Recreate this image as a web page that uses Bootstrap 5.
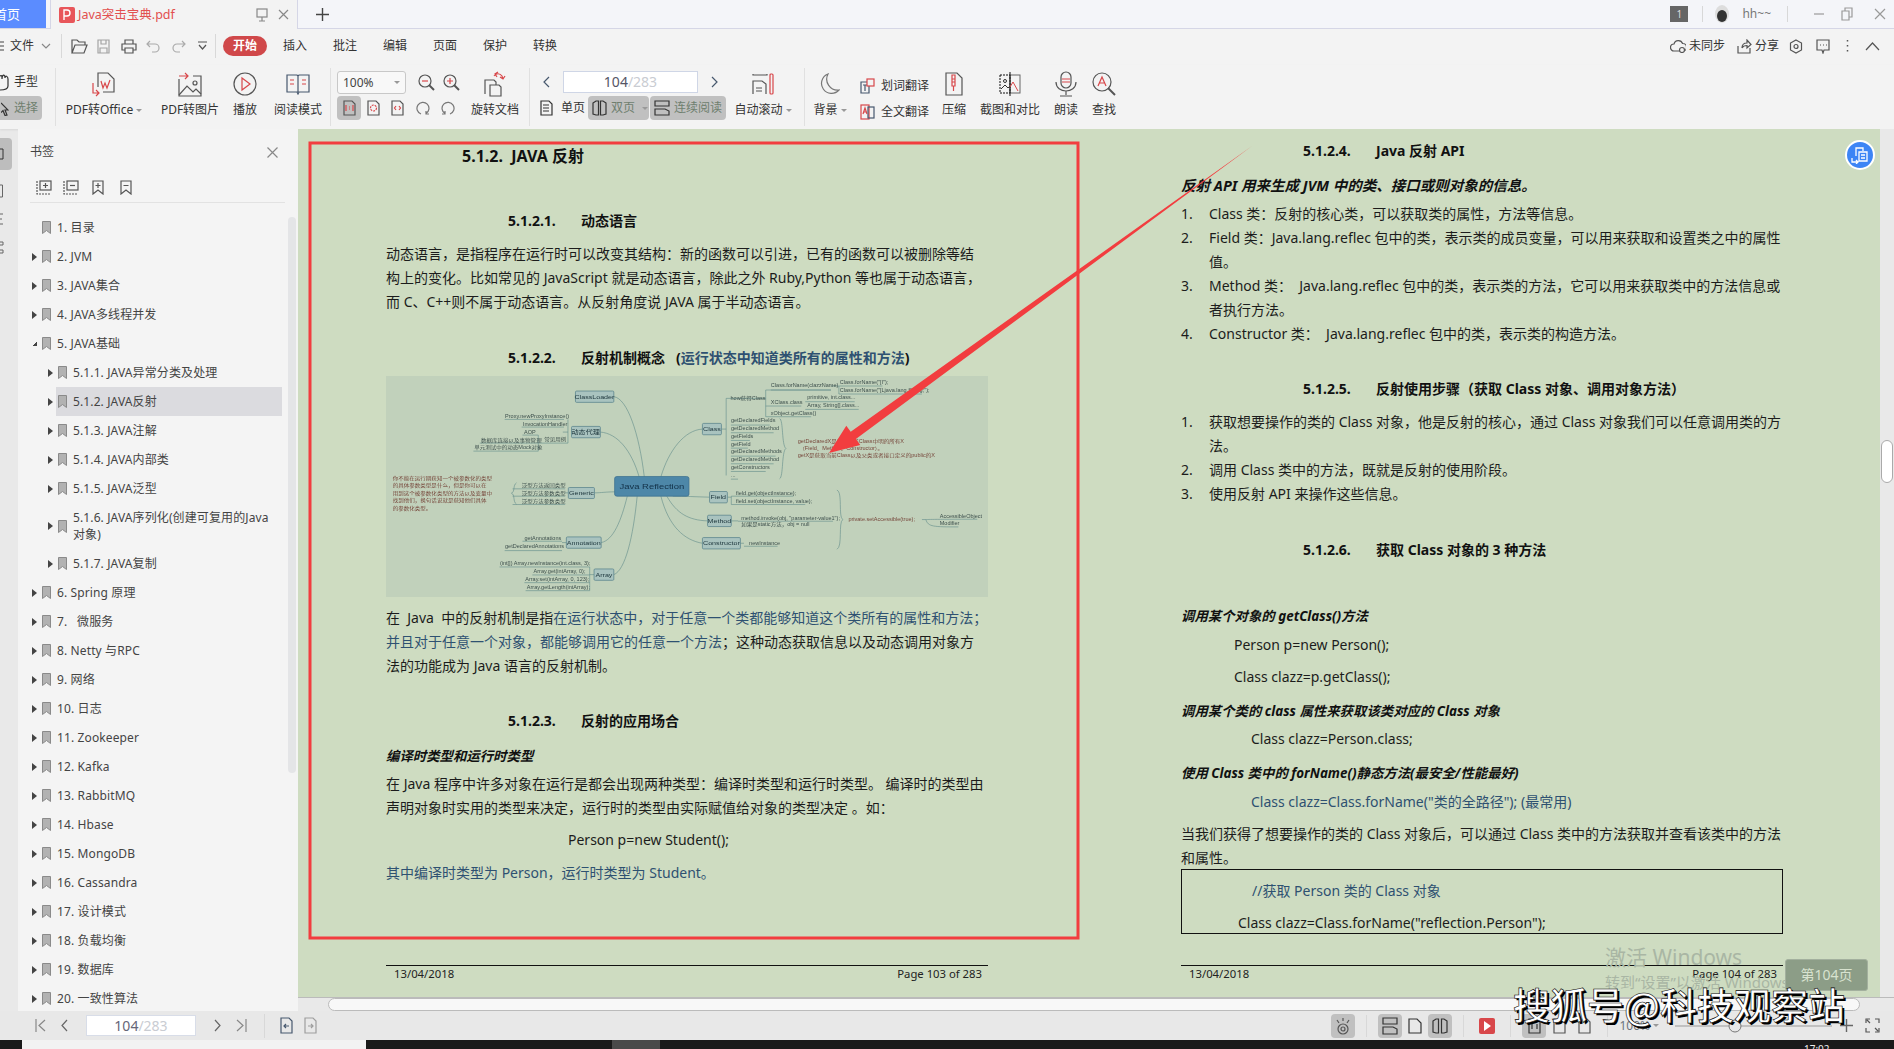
<!DOCTYPE html>
<html lang="zh"><head><meta charset="utf-8"><title>Java突击宝典.pdf</title>
<link href="https://cdn.jsdelivr.net/npm/bootstrap@5.3.0/dist/css/bootstrap.min.css" rel="stylesheet">
<style>
html,body{height:1049px;width:1894px;overflow:hidden;margin:0}
body{font-family:"Noto Sans","Noto Sans CJK SC",sans-serif;font-size:12px;color:#333;line-height:16px;position:relative;background:#f3f3f3}
svg{display:block;flex:none}
.ic{fill:none;stroke:#555;stroke-width:1.2}
.r{stroke:#d8474a}.b{stroke:#47586e}
.tabbar{height:29px;background:#f4f5f9;border-bottom:1px solid #d5d6e6}
.home{width:46px;background:#5b8cff;color:#fff;font-size:13px;line-height:29px;display:flex;justify-content:flex-end;padding-right:26px;overflow:hidden;white-space:nowrap}
.tab{width:248px;margin-left:4px;background:#f3f3f3;border:1px solid #d5d6e6;border-top:0;border-bottom:0;height:29px;padding-left:8px;color:#e25050;font-size:12.5px}
.tab .pdfi{width:16px;height:16px;background:#e8565a;border-radius:2px;margin-right:3px}
.plus{margin-left:18px}
.cnt{width:18px;height:16px;background:#666;color:#ddd;font-size:10px;line-height:16px;text-align:center}
.hh{color:#777;font-size:12px}
.vsep{width:1px;background:#d8d8d8;flex:none}
.menubar{height:36px;background:#f3f3f3;padding-bottom:2px}
.pill{width:44px;height:20px;line-height:20px;border-radius:10px;background:#d0484a;color:#fff;text-align:center;font-weight:700;margin-left:7px;margin-right:16px}
.mn{width:50px}
.ribbon{height:64px;background:#f3f3f3;box-shadow:0 1px 2px rgba(0,0,0,.08);position:relative}
.rs{width:1px;background:#e0e0e0;height:58px;margin-top:3px;flex:none}
.big{padding-top:5px;display:flex;flex-direction:column;align-items:center;flex:none}
.big .i{height:28px;display:flex;align-items:center}
.big .l{margin-top:4px;white-space:nowrap}
.caret{display:inline-block;border:3px solid transparent;border-top:3px solid #999;border-bottom:0;vertical-align:middle;margin-left:3px}
.on{background:#c0c0c0;border-radius:4px}
.on-t{color:#6f7f6f}
.g-a{width:55px;padding-top:5px}
.hand{height:24px;gap:5px}
.sel{height:24px;width:42px;margin-top:2px;border-radius:0 4px 4px 0;gap:5px;padding-left:1px}
.w86{width:86px}.w24{width:24px}.w48{width:48px}.w60{width:60px}
.ml1{margin-left:1px}.ml3{margin-left:3px}.ml16{margin-left:16px}.ml17{margin-left:17px}.ml10{margin-left:10px}.ml5{margin-left:5px}.ml8{margin-left:8px}.ml12{margin-left:12px}.ml13{margin-left:13px}.ml14{margin-left:14px}
.tools{width:126px;padding-top:5px;margin-left:6px}
.zsel{width:69px;height:23px;border:1px solid #c8c8c8;border-radius:3px;background:#f8f8f8;padding:0 5px;color:#444;font-size:12px;line-height:21px}
.tbtn{width:24px;height:24px}
.tr{height:24px}.tr2{height:24px;margin-top:2px}
.pg{width:190px;padding-top:5px;margin-left:10px}
.pgin{width:135px;height:22px;border:1px solid #cfd6e6;background:#fff;text-align:center;font-size:14px;line-height:20px;color:#556;margin:0 13px}
.mut{color:#c9ccd2}
.seg{height:24px;font-size:12px}
.s1{width:46px;padding-left:0}.s2{width:61px;margin-left:2px}.s3{width:76px;margin-left:1px}
.trn{width:72px;padding-top:8px;margin-left:13px}
.trn>div{height:26px}
.trn svg{margin-right:6px}
.rail{width:18px;background:#e9e9e9;flex:none;padding-top:9px}
.rail .act{width:12px;height:32px;background:#bdbdbd;border-radius:0 4px 4px 0}
.rail svg{margin-top:14px}
.rail .act svg{margin-top:0}
.panel{width:280px;background:#f4f4f4;flex:none;position:relative;overflow:hidden;font-size:12px;color:#444}
.ptitle{padding:0 20px 0 12px;height:46px;font-size:12px}
.ptools{margin:0 13px 0 12px;height:28px;border-bottom:1px solid #e2e2e2;padding:5px 0 0 6px}
.ptools svg:nth-child(2){margin-left:11px}
.ptools svg:nth-child(3){margin-left:13px}
.ptools svg:nth-child(4){margin-left:16px}
.ptrack{position:absolute;left:270px;top:88px;width:8px;height:556px;background:#e4e5e7;border-radius:4px}
.tree{padding-top:10px;letter-spacing:.12px}
.row-t{height:29px;display:flex;align-items:center;white-space:nowrap;padding-left:14px}
.row-t.l1{padding-left:30px}
.row-t.two{height:46px;white-space:normal;line-height:17px}
.tri{width:0;height:0;border:4px solid transparent;border-left:5px solid #444;border-right:0;margin-right:5px;flex:none}
.tri.no{border-left-color:transparent}
.tri.dn{width:5px;height:5px;border:0;background:linear-gradient(135deg,transparent 50%,#444 50%);margin-right:5px}
.row-t svg{margin-right:6px}
.row-t.cur{background:linear-gradient(#dbdbdf,#dbdbdf) no-repeat 38px 0/226px 100%}
.doc{height:868px;background:#cedcc1;position:relative}
.pdf{width:602px;height:868px;flex:none;display:flex;flex-direction:column;font-size:14px;line-height:24px;color:#1c1c1c}
.pdf.left{margin-left:88px;padding-top:15px}
.pdf.right{margin-left:193px;padding-top:10px}
.pdf p,.pdf h3,.pdf ol{margin:0;padding:0}
.pdf h3{font-size:14px;font-weight:700;line-height:24px;margin-left:122px;color:#111}
.pdf h3 i{font-style:normal;display:inline-block;width:73px}
.pdf h3.top{font-size:16px;margin-left:76px}
.bi{font-weight:700;font-style:italic;font-size:13.4px;color:#111}
.bi.lg{font-size:14.5px}
.blu{color:#2e5171}
.m4{margin-top:4px!important}.m5{margin-top:5px!important}.m6{margin-top:6px!important}.m8{margin-top:8px!important}.m9{margin-top:9px!important}.m10{margin-top:10px!important}.m11{margin-top:11px!important}.m31{margin-top:31px!important}.m32{margin-top:32px!important}.m41{margin-top:41px!important}.m42{margin-top:42px!important}.mn1{margin-top:-1px!important}
.ind1{margin-left:53px!important}.ind2{margin-left:70px!important}.ind3{margin-left:182px!important}
.li{display:flex}.li span{width:28px;flex:none}
.codebox{border:1px solid #111;height:65px;line-height:20px;padding:11px 0 0 70px}
.codebox .c2{margin:12px 0 0 -14px}
.mm{filter:blur(.35px);height:221px;width:602px;background:#c1d1bb}
.mm text{font-family:"Liberation Sans","Noto Sans CJK SC",sans-serif;font-size:14px;fill:#3d4f4c}
.mm .br{fill:#76463a}
.mm .n{font-size:18px;text-anchor:middle;fill:#20393f}
.mm .ln{fill:none;stroke:#5f8a88;stroke-width:1.6}
.mm .bx{fill:#a9c3bf;stroke:#55808a;stroke-width:2}
.pfoot{border-top:1px solid #111;line-height:16px;font-size:11.3px;margin-bottom:15px;padding:0 6px 0 8px;color:#222}
.vbar{width:14px;background:#e9e9e9;position:absolute;right:0;top:0;bottom:0}
.vthumb{position:absolute;left:1px;top:311px;width:12px;height:43px;background:#fff;border:1px solid #aaa;border-radius:6px}
.hbar{height:14px;background:#e9e9e9;border-top:1px solid #bbb;padding-right:20px}
.hthumb{margin-left:30px;width:1532px;height:13px;background:#f8f8f8;border:1px solid #bbb;border-radius:7px}
.status{height:29px;background:#e8e8e8}
.nin{width:110px;height:21px;background:#fff;border:1px solid #d8dde8;text-align:center;font-size:14px;line-height:19px;color:#667;margin:0 18px}
.sb{width:24px;height:24px;display:flex;align-items:center;justify-content:center;flex:none}
.task{height:9px;background:#1a1a1a;position:relative;overflow:hidden}
.task .srch{width:344px;height:9px;background:#f2f2f2;margin-left:22px}
.task .t2{width:48px;height:9px;background:#4a4a4a;margin-left:246px}
.clock{position:absolute;left:1804px;top:3px;color:#eee;font-size:10px;line-height:12px}
.over{position:absolute;left:0;top:0;pointer-events:none}
.flo{position:absolute;left:1845px;top:140px;width:30px;height:30px;border-radius:50%;background:#3d85f5;border:2px solid #fff;display:flex;align-items:center;justify-content:center}
.wm1{position:absolute;left:1605px;top:943px;font-size:21px;line-height:28px;color:#a9b6a4;white-space:nowrap}
.wm2{position:absolute;left:1605px;top:972px;font-size:15px;line-height:20px;color:#a9b6a4;white-space:nowrap;width:180px;overflow:hidden}
.pbadge{position:absolute;left:1785px;top:959px;width:83px;height:32px;background:#8c9d87;border:1px solid #a3b09e;border-radius:3px;color:#d8e2cf;text-align:center;line-height:30px;font-size:14px}
.sohu{position:absolute;left:1513px;top:979px;font-size:37px;line-height:50px;color:#fff;white-space:nowrap;font-family:"Noto Sans CJK SC",sans-serif;font-weight:500;-webkit-text-stroke:.6px #000;text-shadow:2px 2px 0 #000}
</style></head><body>
<div class="d-flex flex-column">

<!-- tab bar -->
<div class="tabbar d-flex align-items-stretch">
 <div class="home"><span>首页</span></div>
 <div class="tab d-flex align-items-center">
  <span class="pdfi d-flex align-items-center justify-content-center"><svg width="10" height="12" viewBox="0 0 10 12"><path d="M2 11V1h3a3 3 0 0 1 0 6H2" fill="none" stroke="#fff" stroke-width="1.4"/></svg></span>
  <span>Java突击宝典.pdf</span>
  <svg class="ic ms-auto" width="12" height="14" viewBox="0 0 12 14"><rect x="1" y="1" width="10" height="8" stroke="#888"/><path d="M6 9v4M3 13h6" stroke="#888"/></svg>
  <svg class="ic ml10 me-2" width="11" height="11" viewBox="0 0 11 11"><path d="M1 1l9 9M10 1l-9 9" stroke="#888"/></svg>
 </div>
 <div class="plus d-flex align-items-center"><svg width="13" height="13" viewBox="0 0 13 13"><path d="M6.500 0v13M0 6.500h13" stroke="#444" stroke-width="1.4"/></svg></div>
 <div class="ms-auto d-flex align-items-center pe-2">
  <div class="cnt">1</div>
  <div class="vsep ml14" style="height:16px"></div>
  <svg class="ml12" width="14" height="18" viewBox="0 0 14 18"><ellipse cx="7" cy="9" rx="7" ry="9" fill="#ddd"/><ellipse cx="7" cy="11" rx="5" ry="6" fill="#333"/></svg>
  <span class="hh ml13">hh~~</span>
  <div class="vsep ml16" style="height:16px"></div>
  <svg class="ic" width="12" height="12" viewBox="0 0 12 12" style="margin-left:25px"><path d="M1 6h10" stroke="#999"/></svg>
  <svg class="ic" width="12" height="14" viewBox="0 0 12 14" style="margin-left:16px"><path d="M1 4h7v9H1zM4 4V1h7v9H8" stroke="#999"/></svg>
  <svg class="ic" width="12" height="12" viewBox="0 0 12 12" style="margin-left:21px"><path d="M1 1l10 10M11 1L1 11" stroke="#999"/></svg>
 </div>
</div>

<!-- menu -->
<div class="menubar d-flex align-items-center">
 <svg class="ic" width="4" height="10" viewBox="0 0 4 10"><path d="M0 1h4M0 5h4M0 9h4" stroke="#444"/></svg>
 <span style="margin-left:6px">文件</span>
 <svg class="ic ml5" width="10" height="6" style="margin-left:7px" viewBox="0 0 10 6"><path d="M1 1l4 4 4-4" stroke="#888"/></svg>
 <div class="vsep ml10" style="height:24px"></div>
 <svg class="ic" style="margin-left:9px" width="17" height="15" viewBox="0 0 17 15"><path d="M1 14V1h5l2 2h6v3M1 14l3-8h12l-3 8z"/></svg>
 <svg class="ic" style="margin-left:9px;opacity:.5" width="13" height="15" viewBox="0 0 13 15"><path d="M1 1h11v13H1zM4 1v4h5V1M3 14V9h7v5"/></svg>
 <svg class="ic" style="margin-left:11px" width="16" height="15" viewBox="0 0 16 15"><path d="M4 5V1h8v4M4 11H1V5h14v6h-3M4 9h8v5H4z"/></svg>
 <svg class="ic" style="margin-left:9px;opacity:.45" width="14" height="13" viewBox="0 0 14 13"><path d="M4 1L1 4l3 3M1 4h8a4 4 0 0 1 0 8H6"/></svg>
 <svg class="ic" style="margin-left:12px;opacity:.45" width="14" height="13" viewBox="0 0 14 13"><path d="M10 1l3 3-3 3M13 4H5a4 4 0 0 0 0 8h3"/></svg>
 <svg class="ic" style="margin-left:12px" width="9" height="10" viewBox="0 0 9 10"><path d="M0 1h9M1 4l3.500 4L8 4"/></svg>
 <div class="vsep" style="height:24px;margin-left:8px"></div>
 <div class="pill">开始</div>
 <div class="mn">插入</div><div class="mn">批注</div><div class="mn">编辑</div><div class="mn">页面</div><div class="mn">保护</div><div class="mn">转换</div>
 <div class="ms-auto d-flex align-items-center" style="padding-right:14px">
  <svg class="ic" width="16" height="14" viewBox="0 0 16 14"><path d="M4 12a3.500 3.500 0 0 1 0-7 4.500 4.500 0 0 1 8.600-.5A3.500 3.500 0 0 1 13 12z"/><circle cx="12" cy="11" r="2.500" fill="#f3f3f3"/></svg>
  <span style="margin-left:3px">未同步</span>
  <svg class="ic" style="margin-left:12px" width="15" height="15" viewBox="0 0 15 15"><path d="M1 7v7h12V9M5 9c0-4 3-5 5-5V1l4 4.500-4 3.500V6.500c-2 0-4 .5-5 2.500"/></svg>
  <span style="margin-left:3px">分享</span>
  <svg class="ic" style="margin-left:10px" width="14" height="15" viewBox="0 0 14 15"><path d="M7 1l5.500 3v7L7 14l-5.500-3V4z"/><circle cx="7" cy="7.500" r="2"/></svg>
  <svg class="ic" style="margin-left:13px" width="14" height="15" viewBox="0 0 14 15"><path d="M1 1h12v10H8l-1 3-1-3H1zM4 6h1M7 6h1M10 6h1"/></svg>
  <svg style="margin-left:16px" width="3" height="14" viewBox="0 0 3 14"><path d="M1.500 1v1.500M1.500 6v1.500M1.500 11v1.500" stroke="#555" stroke-width="1.5"/></svg>
  <svg class="ic" style="margin-left:16px" width="15" height="9" viewBox="0 0 15 9"><path d="M1 8l6.500-7L14 8"/></svg>
 </div>
</div>

<!-- ribbon -->
<div class="ribbon d-flex">
 <div class="g-a flex-none">
  <div class="hand d-flex align-items-center"><svg class="ic" width="9" height="17" viewBox="0 0 9 17"><path d="M0 2c2-1 2 0 2 3 0-5 3-5 3-1 0-3 3-2 3 1v7c0 3-3 4-8 4" stroke="#333"/></svg><span>手型</span></div>
  <div class="sel on d-flex align-items-center on-t"><svg class="ic" width="8" height="15" viewBox="0 0 8 15"><path d="M0 2l7 7H4l2 5-2 .5-2-5-2 2" stroke="#333"/></svg><span>选择</span></div>
 </div>
 <div class="rs"></div>
 <div class="big w86 ml5"><div class="i"><svg class="ic" width="24" height="26" viewBox="0 0 24 26"><path d="M6 16V2h10l6 6v13H11"/><path class="r" d="M16 2v0M9 10l2 7 2-5 2 5 3-8M1 12v10h6M4 19l3 3-3 3"/></svg></div><div class="l">PDF转Office<span class="caret"></span></div></div>
 <div class="big w86"><div class="i"><svg class="ic" width="24" height="26" viewBox="0 0 24 26"><path d="M1 8v17h22V5h-8"/><path d="M1 24l8-9 6 6 3-3 5 5"/><circle cx="17" cy="12" r="2"/><path class="r" d="M1 5h9M7 2l3 3-3 3"/></svg></div><div class="l">PDF转图片</div></div>
 <div class="big w24"><div class="i"><svg width="24" height="24" viewBox="0 0 24 24"><circle cx="12" cy="12" r="11" fill="none" stroke="#555" stroke-width="1.2"/><path d="M9 6l8 6-8 6z" fill="none" stroke="#d8474a" stroke-width="1.2"/></svg></div><div class="l">播放</div></div>
 <div class="big w48 ml17"><div class="i"><svg class="ic b" width="24" height="22" viewBox="0 0 24 22"><path d="M1 2h10l1 1 1-1h10v17H13l-1 2-1-2H1zM12 3v16"/><path class="r" d="M4 7h4M4 11h4M16 7h4M16 11h4"/></svg></div><div class="l">阅读模式</div></div>
 <div class="rs ml8"></div>
 <div class="tools flex-none">
  <div class="tr d-flex align-items-center">
   <div class="zsel d-flex justify-content-between align-items-center">100%<span class="caret"></span></div>
   <svg class="ic" style="margin-left:12px" width="17" height="17" viewBox="0 0 17 17"><circle cx="7" cy="7" r="6"/><path class="r" d="M4 7h6"/><path d="M11 11l5 5" stroke-width="2"/></svg>
   <svg class="ic" style="margin-left:8px" width="17" height="17" viewBox="0 0 17 17"><circle cx="7" cy="7" r="6"/><path class="r" d="M4 7h6M7 4v6"/><path d="M11 11l5 5" stroke-width="2"/></svg>
  </div>
  <div class="tr2 d-flex align-items-center">
   <div class="tbtn on d-flex align-items-center justify-content-center"><svg class="ic" width="13" height="16" viewBox="0 0 13 16"><path d="M1 1h8l3 3v11H1z"/><path class="r" d="M3 5v6M10 5v6M6 7h1M6 9h1"/></svg></div>
   <svg class="ic ml5" style="margin-left:6px" width="13" height="16" viewBox="0 0 13 16"><path d="M1 1h8l3 3v11H1z"/><circle class="r" cx="6.500" cy="8" r="3" stroke-dasharray="2 1"/></svg>
   <svg class="ic" style="margin-left:11px" width="13" height="16" viewBox="0 0 13 16"><path d="M1 1h8l3 3v11H1z"/><path class="r" d="M5 6L3.500 8 5 10M8 6l1.500 2L8 10"/></svg>
   <svg class="ic" style="margin-left:12px" width="14" height="14" viewBox="0 0 14 14"><path d="M5 13a6 6 0 1 1 5-.5M10 10v3h3" stroke="#777"/></svg>
   <svg class="ic" style="margin-left:11px" width="14" height="14" viewBox="0 0 14 14"><path d="M9 13a6 6 0 1 0-5-.5M4 10v3H1" stroke="#777"/></svg>
  </div>
 </div>
 <div class="big w48 ml8"><div class="i"><svg class="ic" width="24" height="26" viewBox="0 0 24 26"><path d="M2 23V9h9l2 2v3M7 25V14h9l2 2v9z" fill="#f3f3f3"/><path class="r" d="M11 5c2-3 6-3 8 0l1 3M22 5l-2 3-3-2M15 1l-3 2 2 3"/></svg></div><div class="l">旋转文档</div></div>
 <div class="rs ml10"></div>
 <div class="pg flex-none">
  <div class="tr d-flex align-items-center">
   <svg class="ic b ml3" width="7" height="12" viewBox="0 0 7 12"><path d="M6 1L1 6l5 5"/></svg>
   <div class="pgin"><span>104</span><span class="mut">/283</span></div>
   <svg class="ic b" width="7" height="12" viewBox="0 0 7 12"><path d="M1 1l5 5-5 5"/></svg>
  </div>
  <div class="tr2 d-flex align-items-center">
   <div class="seg s1 d-flex align-items-center gap-1"><svg class="ic" width="13" height="16" viewBox="0 0 13 16"><path d="M1 1h8l3 3v11H1zM3 5h6M3 8h6M3 11h6" stroke="#333"/></svg><span class="ms-1">单页</span></div>
   <div class="seg s2 on on-t d-flex align-items-center gap-1 ps-1"><svg class="ic" width="15" height="16" viewBox="0 0 15 16"><path d="M1 3l3-2h2.500v14H4l-3-1zM14 3l-3-2H8.500v14H11l3-1z" stroke="#333"/></svg><span>双页</span><span class="caret"></span></div>
   <div class="seg s3 on on-t d-flex align-items-center gap-1 ps-1"><svg class="ic" width="16" height="16" viewBox="0 0 16 16"><path d="M1 1h14v5H1zM1 9h10l4 2v4H1z" stroke="#333"/></svg><span>连续阅读</span></div>
  </div>
 </div>
 <div class="big ml5" style="width:56px"><div class="i"><svg class="ic" width="22" height="22" viewBox="0 0 22 22"><path d="M1 1v1h14V1M1 21V8h9l4 3v10M4 15h6M4 18h6"/><rect class="r" x="18" y="1" width="3" height="20" rx="1"/></svg></div><div class="l">自动滚动<span class="caret"></span></div></div>
 <div class="rs ml13"></div>
 <div class="big ml8" style="width:34px"><div class="i"><svg class="ic" width="20" height="22" viewBox="0 0 20 22"><path d="M8 1a10 10 0 1 0 11 16A11 11 0 0 1 8 1z" stroke="#777"/></svg></div><div class="l">背景<span class="caret"></span></div></div>
 <div class="trn flex-none">
  <div class="d-flex align-items-center"><svg class="ic b" width="15" height="16" viewBox="0 0 15 16"><path d="M1 4h8v11H1zM3 7h4M5 7v6"/><rect class="r" x="7" y="1" width="7" height="7" fill="#f3f3f3"/></svg><span>划词翻译</span></div>
  <div class="d-flex align-items-center"><svg class="ic" width="15" height="16" viewBox="0 0 15 16"><rect class="r" x="1" y="1" width="8" height="14"/><rect x="8" y="3" width="6" height="11" class="b"/><path class="r" d="M3 10l2-6 2 6M3.500 8h3"/></svg><span>全文翻译</span></div>
 </div>
 <div class="big w24 ml10"><div class="i"><svg class="ic" width="18" height="24" viewBox="0 0 18 24"><path d="M1 1h11l5 5v17H1z"/><path class="r" d="M7 3h3v11H7zM7 7h3M7 10h3M8.500 14v5"/></svg></div><div class="l">压缩</div></div>
 <div class="big w60 ml14"><div class="i"><svg width="22" height="24" viewBox="0 0 22 24" fill="none"><rect x="1" y="3" width="10" height="18" stroke="#111" stroke-dasharray="2 1"/><rect x="11" y="3" width="10" height="18" stroke="#666"/><path d="M11 0v24" stroke="#111"/><path d="M2 17l4-4 3 3 2-2" stroke="#333"/><circle cx="6" cy="9" r="1.500" stroke="#333"/><path d="M11 15l3-5 5 9" stroke="#d8474a"/></svg></div><div class="l">截图和对比</div></div>
 <div class="big w24 ml14"><div class="i"><svg class="ic" width="22" height="26" viewBox="0 0 22 26"><rect x="6" y="1" width="10" height="16" rx="5"/><path d="M1 11c0 12 20 12 20 0M11 20v4M5 25h12"/><path class="r" d="M7 8h8M7 11h8"/></svg></div><div class="l">朗读</div></div>
 <div class="big w24 ml14"><div class="i"><svg class="ic" width="24" height="24" viewBox="0 0 24 24"><circle cx="10" cy="10" r="9"/><path d="M16 16l7 7" stroke-width="2"/><path class="r" d="M6 14l4-9 4 9M7.500 11h5"/></svg></div><div class="l">查找</div></div>
</div>

<!-- middle -->
<div class="d-flex" style="height:882px">
 <div class="rail">
  <div class="act d-flex align-items-center"><svg width="4" height="12" viewBox="0 0 4 12"><path d="M0 1h3v10H0" fill="none" stroke="#333" stroke-width="1"/></svg></div>
  <svg width="4" height="14" viewBox="0 0 4 14"><path d="M0 1h2.500v12H0" fill="none" stroke="#666"/></svg>
  <svg width="4" height="14" viewBox="0 0 4 14"><path d="M0 2h3M0 7h2M0 12h3" fill="none" stroke="#666"/></svg>
  <svg width="4" height="14" viewBox="0 0 4 14"><path d="M0 2h3v3H0M0 10h3v3H0" fill="none" stroke="#666"/></svg>
 </div>
 <div class="panel">
  <div class="ptitle d-flex justify-content-between align-items-center"><span>书签</span><svg class="ic" width="11" height="11" viewBox="0 0 11 11"><path d="M.5.5l10 10M10.500.5l-10 10" stroke="#888"/></svg></div>
  <div class="ptools d-flex align-items-start">
   <svg class="ic" width="16" height="15" viewBox="0 0 16 15"><path d="M1 1v13h13" stroke-dasharray="2 1"/><rect x="4" y="1" width="11" height="9" fill="#f4f4f4"/><path d="M7 5.500h5M9.500 3v5"/></svg>
   <svg class="ic" width="16" height="15" viewBox="0 0 16 15"><path d="M1 1v13h13" stroke-dasharray="2 1"/><rect x="4" y="1" width="11" height="9" fill="#f4f4f4"/><path d="M7 5.500h5"/></svg>
   <svg class="ic" width="12" height="15" viewBox="0 0 12 15"><path d="M1 1h10v13l-5-4-5 4zM3.500 5.500h5M6 3v5"/></svg>
   <svg class="ic" width="12" height="15" viewBox="0 0 12 15"><path d="M1 1h10v13l-5-4-5 4zM3.500 5.500h5"/></svg>
  </div>
  <div class="ptrack"></div>
  <svg width="0" height="0" class="position-absolute"><symbol id="bm" viewBox="0 0 9 13"><path d="M.5.500h8v12L4.500 9.500l-4 3z" fill="#b2b2b2" stroke="#8a8a8a"/></symbol></svg>
  <div class="tree">
   <div class="row-t"><span class="tri no"></span><svg width="9" height="13"><use href="#bm"/></svg>1. 目录</div>
   <div class="row-t"><span class="tri"></span><svg width="9" height="13"><use href="#bm"/></svg>2. JVM</div>
   <div class="row-t"><span class="tri"></span><svg width="9" height="13"><use href="#bm"/></svg>3. JAVA集合</div>
   <div class="row-t"><span class="tri"></span><svg width="9" height="13"><use href="#bm"/></svg>4. JAVA多线程并发</div>
   <div class="row-t"><span class="tri dn"></span><svg width="9" height="13"><use href="#bm"/></svg>5. JAVA基础</div>
   <div class="row-t l1"><span class="tri"></span><svg width="9" height="13"><use href="#bm"/></svg>5.1.1. JAVA异常分类及处理</div>
   <div class="row-t l1 cur"><span class="tri"></span><svg width="9" height="13"><use href="#bm"/></svg>5.1.2. JAVA反射</div>
   <div class="row-t l1"><span class="tri"></span><svg width="9" height="13"><use href="#bm"/></svg>5.1.3. JAVA注解</div>
   <div class="row-t l1"><span class="tri"></span><svg width="9" height="13"><use href="#bm"/></svg>5.1.4. JAVA内部类</div>
   <div class="row-t l1"><span class="tri"></span><svg width="9" height="13"><use href="#bm"/></svg>5.1.5. JAVA泛型</div>
   <div class="row-t l1 two"><span class="tri"></span><svg width="9" height="13"><use href="#bm"/></svg><span>5.1.6. JAVA序列化(创建可复用的Java<br>对象)</span></div>
   <div class="row-t l1"><span class="tri"></span><svg width="9" height="13"><use href="#bm"/></svg>5.1.7. JAVA复制</div>
   <div class="row-t"><span class="tri"></span><svg width="9" height="13"><use href="#bm"/></svg>6. Spring 原理</div>
   <div class="row-t"><span class="tri"></span><svg width="9" height="13"><use href="#bm"/></svg>7.&nbsp;&nbsp;&nbsp;微服务</div>
   <div class="row-t"><span class="tri"></span><svg width="9" height="13"><use href="#bm"/></svg>8. Netty 与RPC</div>
   <div class="row-t"><span class="tri"></span><svg width="9" height="13"><use href="#bm"/></svg>9. 网络</div>
   <div class="row-t"><span class="tri"></span><svg width="9" height="13"><use href="#bm"/></svg>10. 日志</div>
   <div class="row-t"><span class="tri"></span><svg width="9" height="13"><use href="#bm"/></svg>11. Zookeeper</div>
   <div class="row-t"><span class="tri"></span><svg width="9" height="13"><use href="#bm"/></svg>12. Kafka</div>
   <div class="row-t"><span class="tri"></span><svg width="9" height="13"><use href="#bm"/></svg>13. RabbitMQ</div>
   <div class="row-t"><span class="tri"></span><svg width="9" height="13"><use href="#bm"/></svg>14. Hbase</div>
   <div class="row-t"><span class="tri"></span><svg width="9" height="13"><use href="#bm"/></svg>15. MongoDB</div>
   <div class="row-t"><span class="tri"></span><svg width="9" height="13"><use href="#bm"/></svg>16. Cassandra</div>
   <div class="row-t"><span class="tri"></span><svg width="9" height="13"><use href="#bm"/></svg>17. 设计模式</div>
   <div class="row-t"><span class="tri"></span><svg width="9" height="13"><use href="#bm"/></svg>18. 负载均衡</div>
   <div class="row-t"><span class="tri"></span><svg width="9" height="13"><use href="#bm"/></svg>19. 数据库</div>
   <div class="row-t"><span class="tri"></span><svg width="9" height="13"><use href="#bm"/></svg>20. 一致性算法</div>
  </div>
 </div>
 <div class="flex-grow-1 d-flex flex-column">
  <div class="doc d-flex">
   <div class="pdf left">
    <h3 class="top">5.1.2.&nbsp; JAVA 反射</h3>
    <h3 class="m41"><i>5.1.2.1.</i>动态语言</h3>
    <p class="m9">动态语言，是指程序在运行时可以改变其结构：新的函数可以引进，已有的函数可以被删除等结<br>构上的变化。比如常见的 JavaScript 就是动态语言，除此之外 Ruby,Python 等也属于动态语言，<br>而 C、C++则不属于动态语言。从反射角度说 JAVA 属于半动态语言。</p>
    <h3 class="m32"><i>5.1.2.2.</i>反射机制概念&nbsp;&nbsp;&nbsp;(<span class="blu">运行状态中知道类所有的属性和方法</span>)</h3>
    <div class="mm m6">
     <svg width="602" height="221" viewBox="15 18 1522 662" preserveAspectRatio="none">
      <path class="ln" d="M668 320C655 190 625 85 591 80M655 320C635 240 600 190 557 186M595 365C570 365 560 368 542 368M625 378C610 450 590 510 559 517M650 378C640 500 620 600 591 613M710 320C730 240 770 180 815 177M740 378C770 378 800 380 833 381M725 378C750 430 780 450 828 452M710 378C730 470 770 510 815 519"/>
      <path class="ln" d="M863 177H875M875 85V316M875 85H975M988 60H1140M975 60V140M975 60H1140M975 108H1065M975 140H1090M1140 48H1160V72M1160 48H1270M1160 72H1370M1075 95H1200M1075 118H1210M887 165H985M887 188H995M887 211H935M887 234H930M887 258H1000M887 281H995M887 304H975M887 327H905M878 381H888M888 378H1045M888 403H1075M888 403V378M888 452H905M905 453H1145M911 519H920M920 528H1005M462 186H475M315 148H465M358 171H465M360 195H400M252 219H400M236 243H400M400 195V243M400 219H475M475 148V219M335 356H468M335 378H468M335 403H468M468 368H476M360 513H460M315 541H460M460 517H471M302 590H530M385 614H530M365 637H530M368 661H530M530 590V661M530 613H541M1370 448H1380M1380 448C1385 448 1390 447 1510 447M1380 448C1385 470 1400 470 1462 470"/>
      <path class="ln" d="M1010 145C1020 150 1015 225 1026 235C1015 245 1020 320 1010 326M1155 360C1170 365 1158 440 1170 448C1158 456 1170 530 1155 537M345 338C335 345 342 365 332 369C342 373 335 395 345 402" stroke="#555"/>
      <rect class="bx" x="494" y="63" width="97" height="34" rx="3"/><text class="n" x="542" y="86">ClassLoader</text>
      <rect class="bx" x="484" y="169" width="73" height="34" rx="3"/><text class="n" x="520" y="192">动态代理</text>
      <rect class="bx" x="476" y="352" width="66" height="33" rx="3"/><text class="n" x="509" y="375">Generic</text>
      <rect class="bx" x="471" y="500" width="88" height="34" rx="3"/><text class="n" x="515" y="523">Annotation</text>
      <rect class="bx" x="541" y="596" width="50" height="34" rx="3"/><text class="n" x="566" y="619">Array</text>
      <rect class="bx" x="815" y="160" width="48" height="34" rx="3"/><text class="n" x="839" y="183">Class</text>
      <rect class="bx" x="833" y="364" width="45" height="34" rx="3"/><text class="n" x="855" y="387">Field</text>
      <rect class="bx" x="828" y="435" width="60" height="34" rx="3"/><text class="n" x="858" y="458">Method</text>
      <rect class="bx" x="815" y="502" width="96" height="34" rx="3"/><text class="n" x="863" y="525">Constructor</text>
      <rect x="593" y="319" width="188" height="59" rx="6" fill="#4d87a8" stroke="#3c6f8e" stroke-width="2"/><text class="n" x="687" y="357" style="font-size:24px;fill:#123047">Java Reflection</text>
      <text x="988" y="52">Class.forName(clazzName)</text><text x="1162" y="41">Class.forName("[I");</text><text x="1162" y="65">Class.forName("[Ljava.lang.String;");</text><text x="886" y="90">how获得Class</text><text x="988" y="101">XClass.class</text><text x="1080" y="88">primitive, int.class...</text><text x="1080" y="111">Array, String[].class...</text><text x="988" y="134">xObject.getClass()</text>
      <text x="887" y="157">getDeclaredFields</text><text x="887" y="180">getDeclaredMethod</text><text x="887" y="204">getFields</text><text x="887" y="227">getField</text><text x="887" y="250">getDeclaredMethods</text><text x="887" y="273">getDeclaredMethod</text><text x="887" y="297">getConstructors</text><text x="887" y="320">...</text>
      <text class="br" x="1056" y="218">getDeclaredX是获取当前Class中明的所有X</text><text class="br" x="1060" y="241">（Field、Method、Constructor）。</text><text class="br" x="1056" y="262">getX是获取当前Class以及父类或者接口定义的public的X</text>
      <text x="900" y="374">field.get(objectInstance);</text><text x="900" y="398">field.set(objectInstance, value);</text><text x="913" y="449">method.invoke(obj, "parameter-value1");</text><text x="913" y="466">如果是static方法，obj = null</text><text x="933" y="525">newInstance</text>
      <text class="br" x="1184" y="453">private.setAccessible(true);</text><text x="1415" y="442">AccessibleObject</text><text x="1415" y="465">Modifier</text>
      <text x="316" y="144">Proxy.newProxyInstance()</text><text x="361" y="167">InvocationHandler</text><text x="364" y="191">AOP</text><text x="255" y="215">数据库连接以及事物管理</text><text x="238" y="238">单元测试中的动态Mock对象</text><text x="415" y="214">常见用例</text>
      <text x="358" y="351">泛型方法返回类型</text><text x="358" y="374">泛型方法参数类型</text><text x="358" y="398">泛型方法参数类型</text>
      <text class="br" x="32" y="329">你不能在运行期获知一个被参数化的类型</text><text class="br" x="32" y="351">的具体参数类型是什么，但是你可以在</text><text class="br" x="32" y="373">用到这个被参数化类型的方法以及变量中</text><text class="br" x="32" y="395">找到他们，换句话说就是获知他们具体</text><text class="br" x="32" y="418">的参数化类型。</text>
      <text x="365" y="510">getAnnotations</text><text x="316" y="534">getDeclaredAnnotations</text>
      <text x="303" y="585">(int[]) Array.newInstance(int.class, 3);</text><text x="388" y="609">Array.get(intArray, 0);</text><text x="367" y="632">Array.set(intArray, 0, 123);</text><text x="371" y="656">Array.getLength(intArray);</text>
     </svg>
    </div>
    <p class="m9">在&nbsp;&nbsp;Java&nbsp;&nbsp;中的反射机制是指<span class="blu">在运行状态中，对于任意一个类都能够知道这个类所有的属性和方法；<br>并且对于任意一个对象，都能够调用它的任意一个方法</span>；这种动态获取信息以及动态调用对象方<br>法的功能成为 Java 语言的反射机制。</p>
    <h3 class="m31"><i>5.1.2.3.</i>反射的应用场合</h3>
    <p class="bi m11">编译时类型和运行时类型</p>
    <p class="m4">在 Java 程序中许多对象在运行是都会出现两种类型：编译时类型和运行时类型。 编译时的类型由<br>声明对象时实用的类型来决定，运行时的类型由实际赋值给对象的类型决定 。如：</p>
    <p class="m8 ind3">Person p=new Student();</p>
    <p class="m9 blu">其中编译时类型为 Person，运行时类型为 Student。</p>
    <div class="pfoot mt-auto d-flex justify-content-between"><span>13/04/2018</span><span>Page 103 of 283</span></div>
   </div>
   <div class="pdf right">
    <h3><i>5.1.2.4.</i>Java 反射 API</h3>
    <p class="bi lg m10">反射 API 用来生成 JVM 中的类、接口或则对象的信息。</p>
    <ol class="list-unstyled m5">
     <li class="li"><span>1.</span><div>Class 类：反射的核心类，可以获取类的属性，方法等信息。</div></li>
     <li class="li"><span>2.</span><div>Field 类：Java.lang.reflec 包中的类，表示类的成员变量，可以用来获取和设置类之中的属性<br>值。</div></li>
     <li class="li"><span>3.</span><div>Method 类：&nbsp;&nbsp;Java.lang.reflec 包中的类，表示类的方法，它可以用来获取类中的方法信息或<br>者执行方法。</div></li>
     <li class="li"><span>4.</span><div>Constructor 类：&nbsp;&nbsp;Java.lang.reflec 包中的类，表示类的构造方法。</div></li>
    </ol>
    <h3 class="m31"><i>5.1.2.5.</i>反射使用步骤（获取 Class 对象、调用对象方法）</h3>
    <ol class="list-unstyled m9">
     <li class="li"><span>1.</span><div>获取想要操作的类的 Class 对象，他是反射的核心，通过 Class 对象我们可以任意调用类的方<br>法。</div></li>
     <li class="li"><span>2.</span><div>调用 Class 类中的方法，既就是反射的使用阶段。</div></li>
     <li class="li"><span>3.</span><div>使用反射 API 来操作这些信息。</div></li>
    </ol>
    <h3 class="m32"><i>5.1.2.6.</i>获取 Class 对象的 3 种方法</h3>
    <p class="bi m42">调用某个对象的 getClass()方法</p>
    <p class="m5 ind1">Person p=new Person();</p>
    <p class="m8 ind1">Class clazz=p.getClass();</p>
    <p class="bi m10">调用某个类的 class 属性来获取该类对应的 Class 对象</p>
    <p class="m4 ind2">Class clazz=Person.class;</p>
    <p class="bi m10">使用 Class 类中的 forName()静态方法(最安全/性能最好)</p>
    <p class="m5 ind2 blu">Class clazz=Class.forName("类的全路径"); (最常用)</p>
    <p class="m8">当我们获得了想要操作的类的 Class 对象后，可以通过 Class 类中的方法获取并查看该类中的方法<br>和属性。</p>
    <div class="codebox mn1"><div class="blu">//获取 Person 类的 Class 对象</div><div class="c2">Class clazz=Class.forName("reflection.Person");</div></div>
    <div class="pfoot mt-auto d-flex justify-content-between"><span>13/04/2018</span><span>Page 104 of 283</span></div>
   </div>
   <div class="vbar"><div class="vthumb"></div></div>
  </div>
  <div class="hbar"><div class="hthumb"></div></div>
 </div>
</div>

<!-- status -->
<div class="status d-flex align-items-center">
 <svg class="ic" style="margin-left:35px" width="11" height="13" viewBox="0 0 11 13"><path d="M1 0v13M10 1L4 6.500l6 5.500" stroke="#888"/></svg>
 <svg class="ic" style="margin-left:15px" width="7" height="13" viewBox="0 0 7 13"><path d="M6 1L1 6.500 6 12" stroke="#666"/></svg>
 <div class="nin"><span>104</span><span class="mut">/283</span></div>
 <svg class="ic" width="7" height="13" viewBox="0 0 7 13"><path d="M1 1l5 5.500L1 12" stroke="#666"/></svg>
 <svg class="ic" style="margin-left:15px" width="11" height="13" viewBox="0 0 11 13"><path d="M10 0v13M1 1l6 5.500L1 12" stroke="#888"/></svg>
 <div class="vsep" style="height:24px;margin-left:17px"></div>
 <svg class="ic b" style="margin-left:15px" width="13" height="17" viewBox="0 0 13 17"><path d="M1 1h8l3 3v12H1zM9 9H4M6 7L4 9l2 2"/></svg>
 <svg class="ic" style="margin-left:11px;opacity:.5" width="13" height="17" viewBox="0 0 13 17"><path d="M1 1h8l3 3v12H1zM4 9h5M7 7l2 2-2 2"/></svg>
 <div class="ms-auto d-flex align-items-center" style="padding-right:14px">
  <div class="sb on"><svg class="ic" width="18" height="18" viewBox="0 0 18 18"><circle cx="9" cy="12" r="5"/><circle cx="9" cy="12" r="2"/><path d="M9 1v3M3 3l2 3M15 3l-2 3"/></svg></div>
  <div class="vsep" style="height:22px;margin:0 11px"></div>
  <div class="sb on"><svg class="ic" width="16" height="18" viewBox="0 0 16 18"><path d="M1 1h14v6H1zM1 10h10l4 2v5H1z" stroke="#333"/></svg></div>
  <div class="sb ml1"><svg class="ic" width="14" height="16" viewBox="0 0 14 16"><path d="M1 1h8l4 4v10H1z" stroke="#333"/></svg></div>
  <div class="sb ml1 on"><svg class="ic" width="16" height="16" viewBox="0 0 16 16"><path d="M1 3l3-2h2.500v14H4l-3-1zM15 3l-3-2H9.500v14H12l3-1z" stroke="#333"/></svg></div>
  <div class="vsep" style="height:22px;margin:0 11px"></div>
  <div class="sb"><svg width="16" height="16" viewBox="0 0 16 16"><rect width="16" height="16" rx="2" fill="#d8474a"/><path d="M5 3l7 5-7 5z" fill="#fff"/></svg></div>
  <div class="vsep" style="height:22px;margin:0 11px"></div>
  <div class="sb on"><svg class="ic" width="13" height="16" viewBox="0 0 13 16"><path d="M1 1h8l3 3v11H1zM4 6v5M9 6v5" stroke="#333"/></svg></div>
  <div class="sb ml1"><svg class="ic" width="13" height="16" viewBox="0 0 13 16"><path d="M1 1h8l3 3v11H1z"/></svg></div>
  <div class="sb ml1"><svg class="ic" width="13" height="16" viewBox="0 0 13 16"><path d="M1 1h8l3 3v11H1z"/></svg></div>
  <div class="vsep" style="height:22px;margin:0 11px"></div>
  <span class="text-secondary">100%</span><span class="caret"></span>
  <div class="ms-3 d-flex align-items-center"><svg width="157" height="14" viewBox="0 0 157 14"><path d="M0 7h157" stroke="#999"/><circle cx="60" cy="7" r="6" fill="#e8e8e8" stroke="#777"/></svg></div>
  <svg style="margin-left:8px" width="13" height="13" viewBox="0 0 13 13"><path d="M6.500 0v13M0 6.500h13" stroke="#666" stroke-width="1.400"/></svg>
  <svg class="ic" style="margin-left:12px" width="15" height="15" viewBox="0 0 15 15"><path d="M1 5V1h4M10 1h4v4M14 10v4h-4M5 14H1v-4M2 2l3 3M13 13l-3-3"/></svg>
 </div>
</div>

<!-- taskbar -->
<div class="task d-flex"><div class="srch"></div><div class="t2"></div><span class="clock">17:02</span></div>
</div>

<!-- overlays -->
<svg class="over" width="1894" height="1049" viewBox="0 0 1894 1049">
 <rect x="310" y="143" width="768" height="795" fill="none" stroke="#f23d3f" stroke-width="3"/>
 <polygon points="1252,146 855.900,439 860.300,445.100 829,453 846.300,425.700 850.700,431.800" fill="#f23d3f"/>
</svg>
<div class="flo"><svg width="18" height="18" viewBox="0 0 18 18" fill="none" stroke="#fff" stroke-width="1.300"><path d="M5 10V2h7v3M8 6h8v9H8zM10 9h4M10 12h4M1 12v4h6M5 14l2 2-2 2"/></svg></div>
<div class="wm1">激活 Windows</div>
<div class="wm2">转到“设置”以激活 Windows。</div>
<div class="pbadge">第104页</div>
<div class="sohu">搜狐号@科技观察站</div>
<script src="https://cdn.jsdelivr.net/npm/bootstrap@5.3.0/dist/js/bootstrap.bundle.min.js"></script>
</body></html>
